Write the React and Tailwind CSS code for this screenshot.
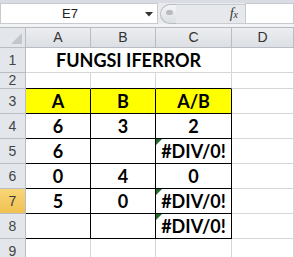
import React from 'react';

const cols = ['A', 'B', 'C', 'D'];

// rows 1..9 with heights
const rows = [
  { n: 1, h: 'h-[25px]' },
  { n: 2, h: 'h-[16px]' },
  { n: 3, h: 'h-[25px]' },
  { n: 4, h: 'h-[25px]' },
  { n: 5, h: 'h-[25px]' },
  { n: 6, h: 'h-[25px]' },
  { n: 7, h: 'h-[25px]' },
  { n: 8, h: 'h-[25px]' },
  { n: 9, h: 'h-[25px]' },
];

const data = {
  3: ['A', 'B', 'A/B'],
  4: ['6', '3', '2'],
  5: ['6', '', '#DIV/0!'],
  6: ['0', '4', '0'],
  7: ['5', '0', '#DIV/0!'],
  8: ['', '', '#DIV/0!'],
};

const errorFlag = { 5: true, 7: true, 8: true };

const ErrorMark = () => (
  <svg className="absolute left-0 top-0" width="6" height="6" viewBox="0 0 6 6">
    <polygon points="0,0 6,0 0,6" fill="#1f6b2a" />
  </svg>
);

const Cell = ({ row, col, value }) => {
  const inTable = row >= 3 && row <= 8 && col < 3;
  const aboveTable = row === 2 && col < 3;
  const yellow = row === 3 && col < 3;
  const lastCol = col === 2;
  let cls = 'relative flex items-center justify-center border-b border-r text-[18px] font-bold text-black ';
  if (inTable) {
    cls += 'border-black ';
  } else if (aboveTable) {
    cls += 'border-r-[#d6d6d6] border-b-black ';
  } else {
    cls += 'border-[#d6d6d6] ';
  }
  if (row === 1 && col < 2) cls += 'border-r-transparent ';
  if (yellow) cls += 'bg-[#ffff00] ';
  else cls += 'bg-white ';
  return (
    <div className={cls}>
      {lastCol && errorFlag[row] && <ErrorMark />}
      <span className="leading-none">{value}</span>
    </div>
  );
};

export default function App() {
  return (
    <div
      className="w-[294px] h-[257px] overflow-hidden bg-white"
      style={{ fontFamily: 'Lato, "Open Sans", sans-serif' }}
    >
      {/* formula bar */}
      <div className="h-[3px] bg-[#d9dde3]" />
      <div className="flex h-[21px] bg-[#e9ebee]" style={{ fontFamily: '"Liberation Sans", Arial, sans-serif' }}>
        <div className="relative flex w-[158px] items-center justify-center border border-[#c6c9ce] bg-white text-[13px] text-[#222]">
          <span className="-ml-[18px]">E7</span>
          <svg className="absolute right-[4px] top-[8px]" width="8" height="5" viewBox="0 0 8 5">
            <polygon points="0,0 8,0 4,4.5" fill="#333" />
          </svg>
        </div>
        <div className="ml-[2px] flex flex-1 items-center">
          <div className="relative h-[20px] w-[16px] rounded-l-full border-y border-l border-[#b9bcc1] bg-gradient-to-b from-[#f3f4f6] to-[#dcdfe3]">
            <div className="absolute left-[5px] top-[5px] h-[5px] w-[7px] rounded-full bg-[#b8bcc2]" />
          </div>
          <div className="flex h-[20px] flex-1 items-center justify-end border-y border-[#c9ccd0] bg-[#e6e8eb] pr-[7px]">
            <span className="text-[14px] italic text-[#333]" style={{ fontFamily: '"Liberation Serif", serif' }}>
              f<span className="text-[10px]">x</span>
            </span>
          </div>
        </div>
        <div className="w-[49px] border border-[#c6c9ce] bg-white" />
      </div>
      <div className="h-[4px] border-b border-[#b5b9bf] bg-[#f2f3f5]" />

      {/* sheet */}
      <div className="grid grid-cols-[26px_65px_65px_76px_1fr]">
        {/* header row */}
        <div className="relative h-[20px] border-b border-r border-[#b9bdc3] bg-[#e3e6ea]">
          <svg className="absolute bottom-[3px] right-[3px]" width="11" height="11" viewBox="0 0 11 11">
            <polygon points="11,0 11,11 0,11" fill="#c3c7cc" />
          </svg>
        </div>
        {cols.map((c) => (
          <div
            key={c}
            className="flex h-[20px] items-center justify-center border-b border-r border-[#b9bdc3] bg-gradient-to-b from-[#eceef1] to-[#dcdfe3] text-[14px] text-[#333]"
            style={{ fontFamily: '"Liberation Sans", Arial, sans-serif' }}
          >
            {c}
          </div>
        ))}

        {rows.map((r) => (
          <React.Fragment key={r.n}>
            <div
              className={`flex ${r.h} items-center justify-center border-b border-r border-[#b9bdc3] text-[14px] ${
                r.n === 7 ? 'bg-gradient-to-b from-[#f8d677] to-[#f1c150] text-[#3a3a3a]' : 'bg-[#e3e6ea] text-[#444]'
              }`}
              style={{ fontFamily: '"Liberation Sans", Arial, sans-serif' }}
            >
              {r.n}
            </div>
            {r.n === 1 ? (
              <>
                <div className="col-span-3 flex h-[25px] items-center justify-center border-b border-r border-[#d6d6d6] bg-white text-[18px] font-bold text-black">
                  FUNGSI IFERROR
                </div>
                <div className="border-b border-r border-[#d6d6d6] bg-white" />
              </>
            ) : (
              <>
                {[0, 1, 2].map((ci) => (
                  <Cell key={ci} row={r.n} col={ci} value={data[r.n] ? data[r.n][ci] : ''} />
                ))}
                <div className="border-b border-r border-[#d6d6d6] bg-white" />
              </>
            )}
          </React.Fragment>
        ))}
      </div>
    </div>
  );
}
